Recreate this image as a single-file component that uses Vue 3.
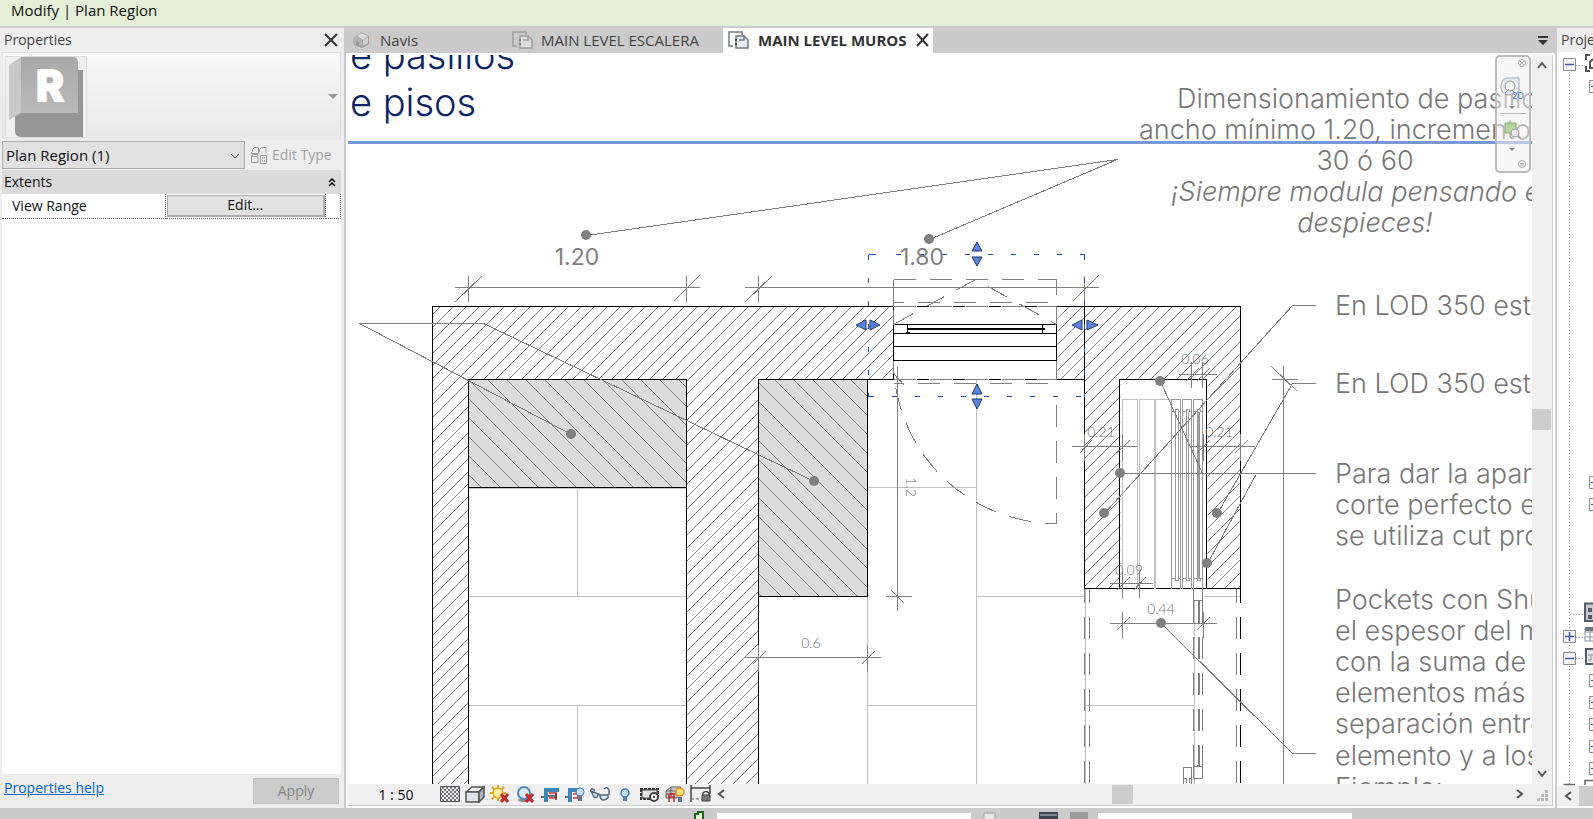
<script setup>
import { ref } from 'vue'

const scale = ref('Plan Region (1)')

const range = (from, to, step) => {
  const out = []
  for (let v = from; v <= to; v += step) out.push(Math.round(v))
  return out
}
// x + y is constant along each wall hatch line
const wallHatch = range(746, 2040, 12.84).map(c => `M${c - 790} 790L${c - 300} 300`).join('')
// x - y is constant along each furniture hatch line
const boxHatch = range(-121, 520, 19.1).map(c => `M${c + 379} 379L${c + 600} 600`).join('')

const dots = [
  [586, 235], [929, 239], [571, 434], [814, 481], [1160, 381], [1120, 473],
  [1104, 513], [1217, 513], [1207, 563], [1161, 623]
]
const dims = [
  { t: '0.06', x: 1195, y: 364 }, { t: '0.21', x: 1101, y: 437 }, { t: '0.21', x: 1219, y: 437 },
  { t: '0.09', x: 1129, y: 575 }, { t: '0.44', x: 1161, y: 614 }, { t: '0.6', x: 811, y: 648 }
]
const notes = [
  ['En LOD 350 estos', 315], ['En LOD 350 estos', 393], ['Para dar la apariencia', 483],
  ['corte perfecto en', 514], ['se utiliza cut profile', 545], ['Pockets con Shutter', 609],
  ['el espesor del muro', 640], ['con la suma de', 671], ['elementos más', 702],
  ['separación entre', 733], ['elemento y a los', 765], ['Ejemplo:', 797]
]
const treeBoxes = [[1589, 80], [1589, 476], [1589, 498], [1589, 674], [1589, 696], [1589, 718], [1589, 740], [1589, 762]]
</script>

<template>
  <div class="app">
    <header class="ribbon">Modify | Plan Region</header>

    <div class="work">
      <aside class="props">
        <div class="panel-head">
          <span>Properties</span>
          <button class="bare" aria-label="Close properties">
            <svg width="14" height="14"><path d="M1 1L13 13M13 1L1 13" stroke="#333" stroke-width="2" /></svg>
          </button>
        </div>
        <div class="type-box">
          <svg class="logo" width="82" height="82" viewBox="0 0 82 82">
            <defs>
              <linearGradient id="lg" x1="0" y1="0" x2="0" y2="1"><stop offset="0" stop-color="#a9a9a9" /><stop offset="1" stop-color="#b9b9b9" /></linearGradient>
            </defs>
            <path d="M0.5 0.5H81.5V81.5H0.5Z" fill="#f0f0f0" stroke="#dcdcdc" />
            <path d="M10 57H73V14H78V81H17Q10 81 10 75Z" fill="#969696" />
            <path d="M16 1H68Q73 1 73 6V57H16Z" fill="url(#lg)" />
            <path d="M16 1V57L4 64V9Z" fill="#c8c8c8" />
            <text x="31" y="45" font-family="Inter, sans-serif" font-weight="800" font-size="42" fill="#fff" stroke="#fff" stroke-width="2">R</text>
          </svg>
          <button class="bare" aria-label="Choose type"><svg width="10" height="6"><path d="M0 0H10L5 5Z" fill="#999" /></svg></button>
        </div>
        <div class="type-row">
          <div class="combo">
            <select v-model="scale" aria-label="Element filter"><option>Plan Region (1)</option></select>
            <svg width="10" height="6"><path d="M1 1L5 5L9 1" fill="none" stroke="#444" /></svg>
          </div>
          <button class="bare edit-type">
            <svg width="16" height="17" fill="none" stroke="#9c9c9c"><path d="M1.5 5V2.5L3.5 .5H7.5V6.5H.5V5M.5 9.5H6.500M.5 15.500V9L2 7.500H7V15.500ZM8.500 5V2.500L10.500.5H15V6" /><path d="M9.500 8.500H15.500V16.500H9.500ZM11 11H14M11 14H12M13 14H14" /></svg>
            Edit Type
          </button>
        </div>
        <table class="grid">
          <colgroup><col class="c-name"><col><col class="c-tail"></colgroup>
          <thead>
            <tr><th colspan="3"><span class="group">Extents
              <svg width="8" height="9"><path d="M1 4L4 1L7 4M1 8L4 5L7 8" fill="none" stroke="#000" stroke-width="1.500" /></svg></span></th></tr>
          </thead>
          <tbody>
            <tr><td class="name">View Range</td><td class="val"><button class="edit">Edit...</button></td><td></td></tr>
          </tbody>
        </table>
        <div class="blank"></div>
        <div class="foot">
          <a href="#">Properties help</a>
          <button class="apply" disabled>Apply</button>
        </div>
      </aside>

      <main class="center">
        <nav class="tabs">
          <button class="tab t1">
            <svg width="18" height="18"><path d="M1 8L9 1L17 5V13L10 17L2 14Z" fill="#9a9a9a" /><path d="M9 2L16 5L11 9L5 5Z" fill="#dadada" /><path d="M1 8L5 5L10 9V16L7 15V11L4 10V14L2 13Z" fill="#b0b0b0" /><path d="M11 9L16 6V12L11 15Z" fill="#d0d0d0" /></svg>
            Navis
          </button>
          <button class="tab t2">
            <svg width="21" height="18" fill="none" stroke="#a0a0a0" stroke-width="1.500"><path d="M5 15H1V1H14V4" /><path d="M8 5H16L20 9V17H8Z" fill="#ddd" /><path d="M8 8V15" stroke="#777" stroke-dasharray="2 2" /><path d="M11 9H16V4" /></svg>
            MAIN LEVEL ESCALERA
          </button>
          <button class="tab t3 active">
            <svg width="21" height="18" fill="none" stroke="#737a82" stroke-width="1.500"><path d="M5 15H1V1H14V4" /><path d="M8 5H16L20 9V17H8Z" fill="#e8ecf1" /><path d="M8 8V15" stroke="#333" stroke-dasharray="2 2" /><path d="M11 9H16V4" /></svg>
            MAIN LEVEL MUROS
            <svg width="13" height="14"><path d="M1 1L12 13M12 1L1 13" stroke="#333" stroke-width="2" /></svg>
          </button>
          <span class="grow"></span>
          <button class="bare more" aria-label="Open views"><svg width="10" height="9"><path d="M0 0H10V2H0ZM0 4H10L5 9Z" fill="#333" /></svg></button>
        </nav>

        <div class="frame">
          <div class="upper">
            <div class="view">
              <svg class="drawing" role="img" aria-label="Floor plan">
                <defs>
                  <clipPath id="walls">
                    <path clip-rule="evenodd" d="M432 306H893V379H867V379H758V790H686V379H468V790H432ZM1057 306H1240V588H1207V379H1120V588H1084V379H1057Z" />
                  </clipPath>
                  <clipPath id="boxes"><path d="M468 379H686V487H468ZM758 379H867V596H758Z" /></clipPath>
                </defs>
                <g transform="translate(-347.5 -54.5)" fill="none" shape-rendering="crispEdges">
                  <path class="title-rule" d="M347 142H1700" />
                  <!-- floor tiles -->
                  <path stroke="#c0c0c0" d="M577 488V596M577 705V790M468 488H686M468 596H686M468 705H686M867 596V790M976 379V790M867 487H976M976 596H1084M867 705H976M1085 588V790M1085 705H1194M1194 600V790M1203 596H1240" />
                  <!-- walls and furniture -->
                  <path d="M468 379H686V487H468ZM758 379H867V596H758Z" fill="#dcdcdc" />
                  <path :d="boxHatch" stroke="#808080" clip-path="url(#boxes)" />
                  <path :d="wallHatch" stroke="#808080" clip-path="url(#walls)" />
                  <path stroke="#000" d="M432 790V306H893M468 790V379H686V790M468 487H686M758 790V379H893M867 379V596H758M1056 306H1240V588M1056 379H1084M1084 306V588H1240M1119 588V379H1206V588" />
                  <!-- window -->
                  <path stroke="#808080" d="M893 279V324M1056 279V294M1056 306V379" />
                  <path stroke="#000" d="M893 306V309M893 379V324H1056V360H893M893 333H1056M893 346H1056M907 324V333M905 332H909M1042 324V333" />
                  <path stroke="#000" stroke-width="2" d="M907 328H1044" />
                  <g stroke="#808080" stroke-dasharray="22 14">
                    <path d="M893 279H1056M893 324L975 279L1056 324" />
                    <path stroke-dashoffset="12" d="M893 302H1056M893 383H1056" />
                    <path d="M893 306H1056M893 379H1056" />
                    <path stroke="#000" stroke-dasharray="12 24" stroke-dashoffset="-23" d="M893 306H1056M893 379H1056" />
                    <path stroke-dashoffset="8" d="M893 360A163 163 0 0 0 1056 523V397" />
                    <!-- lower shutters -->
                    <path stroke-dashoffset="8" d="M1084 588V790M1089 588V790M1236 588V790" />
                    <path stroke="#000" stroke-dashoffset="8" d="M1240 588V790" />
                    <path d="M1193 600V768M1202 600V768" />
                    <path stroke-width="2" d="M1198 600V768" />
                  </g>
                  <!-- pocket leaves -->
                  <path stroke="#c0c0c0" d="M1122 588V399H1137V588M1139 588V399H1154V588M1155 588V399H1171" />
                  <path stroke="#999" d="M1171 588V399H1180V588M1182 588V399H1191V588M1193 588V399H1202V588M1171 411H1175V409H1178V411H1180M1182 411H1186V409H1189V411H1191M1193 411H1197V409H1200V411H1202M1171 578H1175V580H1178V578H1180M1182 578H1186V580H1189V578H1191M1193 578H1197V580H1200V578H1202M1175 411V578M1178 411V578M1186 411V578M1188 411V578M1197 411V578M1198 411V578M1199 411V578" />
                  <path stroke="#808080" d="M1193 588V600H1202V588M1193 766V778H1202V766H1199V764M1197 764V766H1193M1183 790V767H1191V790M1183 778H1186V782M1189 782V778H1191" />
                  <!-- dimensions -->
                  <path stroke="#808080" d="M454 287H699M468 275V301M686 275V301M455 301L482 275M673 301L699 275M744 287H1098M758 275V301M1084 275V301M745 301L772 275M1072 301L1098 275" />
                  <path stroke="#808080" d="M743 657H880M758 644V671M867 644V671M752 664L765 651M861 664L874 651M897 366V610M885 596H911M891 590L904 603M893 373L904 385M893 379H904" />
                  <path stroke="#808080" d="M1071 446H1136M1084 433V460M1122 433V460M1079 453L1091 440M1116 453L1129 440M1190 446H1254M1203 433V460M1240 433V460M1196 453L1209 440M1234 453L1247 440M1178 374H1216M1191 361V387M1202 361V387M1185 381L1198 368M1196 381L1209 368" />
                  <path stroke="#808080" d="M1109 583H1152M1122 570V597M1139 570V597M1116 590L1129 577M1133 590L1145 577M1109 623H1216M1122 611V637M1203 611V637M1116 630L1129 617M1196 630L1209 617M1283 365V790M1271 379H1297M1271 366L1297 391" />
                  <!-- leaders -->
                  <path stroke="#808080" d="M586 235L1117 159L929 239M814 481L483 323H359L571 434M1315 305H1292L1104 513M1315 383H1292L1217 513M1315 473H1120M1160 381L1202 473M1255 475L1207 563M1315 753H1292L1161 623" />
                  <path stroke="#1a4fc0" stroke-dasharray="7 20 5 18 5 18 5 18 5 18 5 18 5 18 5 18 5 18" d="M868 254H1084" />
                  <path stroke="#1a4fc0" stroke-dasharray="5 18" d="M868 396H1084M868 254V396M1084 254V396" />
                </g>
                <g transform="translate(-348 -55)">
                  <circle v-for="(d, i) in dots" :key="i" :cx="d[0]" :cy="d[1]" r="5" fill="#808080" />
                  <path fill="#5b84dc" stroke="#20386e" d="M977 242L972 251H982ZM972 257H982L977 266ZM977 384L972 394H982ZM972 399H982L977 409ZM856 325L866 320V330ZM870 320V330L880 325ZM1072 325L1082 320V330ZM1087 320V330L1098 325Z" />

                  <g class="title"><text x="350" y="69">e pasillos</text><text x="350" y="116">e pisos</text></g>
                  <g class="note">
                    <text x="1177" y="108">Dimensionamiento de pasillo</text>
                    <text x="1139" y="139">ancho mínimo 1.20, incremento</text>
                    <text x="1365" y="170" text-anchor="middle">30 ó 60</text>
                    <text x="1171" y="201" class="it">¡Siempre modula pensando en</text>
                    <text x="1365" y="232" text-anchor="middle" class="it">despieces!</text>
                    <text v-for="(n, i) in notes" :key="i" x="1335" :y="n[1]">{{ n[0] }}</text>
                  </g>
                  <g class="big"><text x="577" y="265">1.20</text><text x="922" y="265">1.80</text></g>
                  <g class="small">
                    <text v-for="(d, i) in dims" :key="i" :x="d.x" :y="d.y">{{ d.t }}</text>
                    <text transform="translate(906 487) rotate(90)">1.2</text>
                  </g>
                </g>
              </svg>
              <div class="navbar">
                <button class="bare end" aria-label="Close"><svg width="8" height="8" fill="none" stroke="#aaa"><circle cx="4" cy="4" r="3.500" /><path d="M2 2L6 6M6 2L2 6" /></svg></button>
                <button class="bare" aria-label="2D wheel">
                  <svg width="26" height="34"><path d="M1 12C1 5 5 3 9 3H19V14C19 18 15 20 10 20C4 20 1 17 1 12Z" fill="#e3e6ec" fill-opacity=".7" stroke="#a4a8b0" /><circle cx="10" cy="11" r="5" fill="#f4f4f4" stroke="#999" /><path d="M5 18L9 14M15 18L12 15" stroke="#999" /><text x="12" y="24" font-family="Inter, sans-serif" font-size="9" font-weight="500" fill="#5b90cc">2D</text><path d="M9 31H15L12 34Z" fill="#888" /></svg>
                </button>
                <hr />
                <button class="bare" aria-label="Zoom">
                  <svg width="26" height="34"><path d="M5 5H16V12L11 15H5Z" fill="#b4d4a0" stroke="#84b070" /><circle cx="15" cy="15" r="4" fill="#e8e8e8" stroke="#a4a4a4" /><path d="M18 18L21 21" stroke="#a4a4a4" stroke-width="2" /><path d="M9 30H15L12 33Z" fill="#888" /></svg>
                </button>
                <button class="bare end low" aria-label="Options"><svg width="8" height="8" fill="none" stroke="#aaa"><circle cx="4" cy="4" r="3.500" /><path d="M2 3.500H6M2 5H6" /></svg></button>
              </div>
            </div>
            <div class="vscroll">
              <button class="bare" aria-label="Scroll up"><svg width="10" height="8"><path d="M1 7L5 2L9 7" fill="none" stroke="#555" stroke-width="2" /></svg></button>
              <div class="vtrack"><span class="vthumb"></span></div>
              <button class="bare" aria-label="Scroll down"><svg width="10" height="8"><path d="M1 1L5 6L9 1" fill="none" stroke="#555" stroke-width="2" /></svg></button>
            </div>
          </div>

          <div class="viewbar">
            <button class="bare scale">1 : 50</button>
            <div class="tools">
              <button class="bare" aria-label="Detail level"><svg width="20" height="18"><defs><pattern id="chk" width="4" height="4" patternUnits="userSpaceOnUse"><path d="M0 0H2V2H4V4H2V2H0Z" fill="#777" /></pattern></defs><path d="M.5 1.500H19.500V16.500H.5Z" fill="#e6e8ec" stroke="#555" /><path d="M1 2H19V16H1Z" fill="url(#chk)" /></svg></button>
              <button class="bare" aria-label="Visual style"><svg width="20" height="18" stroke="#555" stroke-width="1.500"><path d="M1 7L7 2H19L14 7Z" fill="#f5f5f5" /><path d="M1 7H14V17H1Z" fill="#e0e2e8" /><path d="M14 7L19 2V12L14 17Z" fill="#aeb2bc" /></svg></button>
              <button class="bare" aria-label="Sun path off"><svg width="20" height="18"><path d="M8 0V16M0 8H16M2 2L14 14M14 2L2 14" stroke="#e8a81c" stroke-width="2" /><circle cx="8" cy="8" r="5" fill="#fff0a0" stroke="#e8a81c" stroke-width="1.500" /><path d="M11 9L18 17M18 9L11 17" stroke="#c8282c" stroke-width="3" /></svg></button>
              <button class="bare" aria-label="Shadows off"><svg width="20" height="18"><ellipse cx="10" cy="15" rx="7" ry="2" fill="#888" /><circle cx="9" cy="8" r="6" fill="#d6e9f8" stroke="#4d88c0" stroke-width="2" /><path d="M11 9L18 17M18 9L11 17" stroke="#c8282c" stroke-width="3" /></svg></button>
              <button class="bare" aria-label="Crop view"><svg width="20" height="18"><path d="M9 8H16V13H9" fill="none" stroke="#d03030" stroke-width="1.500" /><path d="M1 12H6M16 8V15M6 11H17" stroke="#444" stroke-width="1.500" /><path d="M6 17V5H19" fill="none" stroke="#3c86b8" stroke-width="4" /></svg></button>
              <button class="bare" aria-label="Crop region"><svg width="20" height="18"><path d="M8 9H13V13H8" fill="none" stroke="#d03030" stroke-width="1.500" /><path d="M0 12H4" stroke="#444" stroke-width="1.500" /><path d="M5 17V5H14" fill="none" stroke="#3c86b8" stroke-width="4" /><circle cx="15" cy="7" r="4" fill="#c9e2f8" stroke="#3f7fc0" /><path d="M13 11H17V16H13Z" fill="#6a7c90" /></svg></button>
              <button class="bare" aria-label="Hide or isolate"><svg width="20" height="18" fill="#d8e4ee" stroke="#556878" stroke-width="1.500"><path d="M1 5Q2 2 5 6M14 4Q17 1 19 5V10" fill="none" /><path d="M1 6L8 9Q8 14 4 12ZM10 10L18 10Q19 14 14 15Q10 15 10 10ZM8 9L10 10" /></svg></button>
              <button class="bare" aria-label="Reveal hidden"><svg width="20" height="18"><circle cx="10" cy="8" r="4" fill="#c9e2f8" stroke="#3f7fc0" stroke-width="1.500" /><path d="M8 12H12V16H8Z" fill="#5a7ca8" /></svg></button>
              <button class="bare" aria-label="Temporary view"><svg width="20" height="18"><path d="M1 4V14H18V4Z" fill="none" stroke="#333" stroke-width="2" stroke-dasharray="3 1" /><path d="M2 5H17V13H2Z" fill="#e4e4e4" stroke="#444" /><circle cx="14" cy="12" r="4" fill="#fff" stroke="#444" stroke-width="2" /><circle cx="14" cy="12" r="1" fill="#222" /></svg></button>
              <button class="bare" aria-label="Analytical model"><svg width="20" height="18"><path d="M1 6L6 2H16L12 6ZM1 6V13H12V6M6 2V12M1 9H12" fill="#c8c8c8" stroke="#666" /><path d="M4 17V9H9V17M3 12H10" fill="none" stroke="#c03030" stroke-width="1.500" /><circle cx="15" cy="7" r="4" fill="#ffdf80" stroke="#ee8a18" stroke-width="1.500" /><path d="M13 12H17V17H13Z" fill="#5f7690" /></svg></button>
              <button class="bare" aria-label="Reveal constraints"><svg width="21" height="18"><path d="M1 0V17M20 0V9M1 3H20" stroke="#444" stroke-width="1.500" /><path d="M1 14H12" stroke="#666" stroke-dasharray="3 2" /><path d="M12 10H20V16H12Z" fill="#777" stroke="#444" /><path d="M13 10V8Q16 5 19 8V10" fill="none" stroke="#444" stroke-width="1.500" /></svg></button>
            </div>
            <button class="bare harrow" aria-label="Scroll left"><svg width="8" height="10"><path d="M7 1L2 5L7 9" fill="none" stroke="#555" stroke-width="2" /></svg></button>
            <div class="htrack"><span class="hthumb"></span></div>
            <button class="bare harrow" aria-label="Scroll right"><svg width="8" height="10"><path d="M1 1L6 5L1 9" fill="none" stroke="#555" stroke-width="2" /></svg></button>
            <svg class="grip" width="12" height="12" fill="#bbb"><path d="M8 0H11V3H8ZM4 4H7V7H4ZM8 4H11V7H8ZM0 8H3V11H0ZM4 8H7V11H4ZM8 8H11V11H8Z" /></svg>
          </div>
        </div>
      </main>

      <aside class="project">
        <div class="panel-head">Project Browser</div>
        <div class="tree">
          <svg role="img" aria-label="Project tree">
            <g transform="translate(-1557 -52)">
              <path d="M1569.500 72V790M1576 65.500H1585M1570 614.500H1584M1576 637.500H1584M1576 658.500H1584" stroke="#999" stroke-dasharray="1 2" />
              <g fill="#f6f6f6" stroke="#8c8c8c">
                <path d="M1563.500 58.500H1575.500V70.500H1563.500ZM1563.500 630.500H1575.500V642.500H1563.500ZM1563.500 652.500H1575.500V664.500H1563.500Z" />
                <path v-for="(b, i) in treeBoxes" :key="i" :d="`M${b[0]}.5 ${b[1]}.5h12v12h-12z`" />
              </g>
              <path d="M1565 64.500H1574M1565 636.500H1574M1569.500 632V641M1565 658.500H1574" stroke="#3c5cb0" stroke-width="1.500" />
              <path v-for="(b, i) in treeBoxes" :key="i" :d="`M${b[0] + 2} ${b[1]}.5m0 6h8`" stroke="#3c5cb0" />
              <path d="M1590 55H1586V60M1586 66V71H1590M1593 59L1590 62V68H1593" fill="none" stroke="#555" stroke-width="2" />
              <path d="M1585 603.500H1600V621H1585Z" fill="#c8ccd2" stroke="#555c66" stroke-width="2" /><path d="M1588 608H1592V612H1588ZM1588 615H1592V619H1588Z" fill="#505a68" />
              <path d="M1585 628H1600V641H1585ZM1585 632H1600M1585 637H1600M1590 628V641" fill="#fff" stroke="#8a929c" /><path d="M1585 627H1600V631H1585Z" fill="#6d7682" />
              <path d="M1586 649H1600V664H1586Z" fill="#e4e8ee" stroke="#555c66" stroke-width="2" /><path d="M1588 655H1593M1588 660H1591V656" fill="none" stroke="#7a8694" />
              <path d="M1563.500 784.500H1575M1585 785V780.500H1600" stroke="#666" stroke-width="1.500" fill="none" />
            </g>
          </svg>
        </div>
        <div class="pscroll"><button class="bare" aria-label="Scroll left"><svg width="8" height="10"><path d="M7 1L2 5L7 9" fill="none" stroke="#555" stroke-width="2" /></svg></button><span></span></div>
      </aside>
    </div>

    <footer class="status">
      <svg class="s1" width="10" height="8"><path d="M1 8V3H4V1H9V8" fill="#e4f4d8" stroke="#1c6414" stroke-width="2" /></svg>
      <div class="field"></div>
      <svg class="s2" width="106" height="8"><path d="M1 8V2H12V8" fill="#e8e8e8" stroke="#999" /><path d="M56 8V1H75V8Z" fill="#3c4452" /><path d="M57 4H74" stroke="#7c8798" stroke-width="2" /><path d="M87 8V1H105V8Z" fill="#9b9b9b" /></svg>
      <div class="field"></div>
    </footer>
  </div>
</template>

<style>
body { margin: 0; }
</style>

<style scoped>
.app { height: 100vh; display: flex; flex-direction: column; overflow: hidden; background: #cbcbcb; font: 15px/20px "Open Sans", "Noto Sans", sans-serif; color: #111; }
.app * { box-sizing: border-box; }
svg { display: block; flex: none; }
button, select { font: inherit; color: inherit; }
.bare { border: 0; padding: 0; background: none; display: flex; align-items: center; justify-content: center; }
.ribbon { height: 26px; padding-left: 11px; background: #e5efd7; line-height: 20px; flex: none; }
.work { flex: 1; min-height: 0; display: flex; margin-top: 2px; }

.props { width: 344px; flex: none; display: flex; flex-direction: column; background: #eee; padding: 0 3px 0 2px; }
.panel-head { height: 24px; flex: none; display: flex; align-items: center; justify-content: space-between; padding: 0 3px 0 2px; color: #444; font-size: 14px; white-space: nowrap; overflow: hidden; }
.type-box { height: 88px; display: flex; align-items: center; justify-content: space-between; padding: 0 2px; border: 1px solid #e0e0e0; border-bottom: 0; background: linear-gradient(#f8f8f8, #e9e9e9); }
.type-row { height: 30px; display: flex; align-items: center; }
.combo { position: relative; width: 243px; height: 28px; }
.combo select { appearance: none; width: 100%; height: 28px; padding: 0 3px; border: 1px solid #adadad; border-radius: 0; background: #e1e1e1; color: #111; }
.combo svg { position: absolute; right: 5px; top: 12px; pointer-events: none; }
.edit-type { margin-left: 6px; gap: 5px; color: #a0a0a0; font-size: 14px; }
.grid { border-collapse: collapse; width: 339px; table-layout: fixed; background: #fff; font-size: 14px; }
.c-name { width: 163px; }
.c-tail { width: 15px; }
.grid th { height: 24px; padding: 0; background: #dadada; font-weight: 400; text-align: left; }
.group { display: flex; justify-content: space-between; align-items: center; padding: 0 5px 0 2px; }
.grid td { height: 24px; padding: 0; border-bottom: 1px dotted #666; border-right: 1px dotted #666; }
.grid .name { padding-left: 10px; }
.grid .val { padding-left: 1px; }
.edit { display: block; width: 100%; height: 22px; padding: 0; border: 1px solid #adadad; border-right-width: 2px; border-bottom-width: 2px; background: #e1e1e1; line-height: 18px; }
.blank { flex: 1; width: 339px; background: #fff; }
.foot { height: 34px; flex: none; display: flex; justify-content: space-between; padding: 4px 2px 0 2px; font-size: 14px; }
.foot a { color: #0066cc; }
.apply { width: 86px; height: 26px; padding: 0; border: 1px solid #bfbfbf; background: #ccc; color: #848484; }

.center { flex: 1; min-width: 0; margin: 0 2px; display: flex; flex-direction: column; }
.tabs { height: 25px; flex: none; display: flex; background: #cbcbcb; }
.tab { display: flex; align-items: center; border: 0; padding: 0 0 2px; background: none; color: #444; white-space: nowrap; }
.t1 { width: 163px; padding-left: 6px; gap: 10px; }
.t2 { width: 214px; padding-left: 3px; gap: 8px; }
.t3 { width: 210px; padding-left: 5px; gap: 9px; }
.active { background: #fff; color: #333; font-weight: 700; }
.grow { flex: 1; }
.more { width: 25px; }
.frame { flex: 1; min-height: 0; display: flex; flex-direction: column; background: #fff; padding: 2px; }
.upper { flex: 1; min-height: 0; display: flex; border-right: 1px solid #ccc; }
.view { position: relative; flex: 1; min-width: 0; overflow: hidden; }
.drawing { width: 100%; height: 100%; }
.title-rule { stroke: #7898dc; stroke-width: 3px; }
.title { font: 38px Inter, sans-serif; font-weight: 300; fill: #0a2468; }
.note { font: 27px Inter, sans-serif; font-weight: 300; fill: #777; }
.it { font-style: italic; }
.big { font: 23px Inter, sans-serif; fill: #808080; text-anchor: middle; }
.small { font: 300 14px Lato, sans-serif; fill: #707070; text-anchor: middle; }
.navbar { position: absolute; right: 1px; top: 0; width: 36px; height: 118px; border: 2px solid #bcbcbc; border-radius: 5px; background: rgb(240 240 240 / 55%); padding: 2px 3px; display: flex; flex-direction: column; }
.navbar hr { width: 100%; margin: 4px 0; border: 0; border-top: 1px solid #bbb; }
.end { justify-content: flex-end; height: 8px; margin-bottom: 8px; }
.low { margin: auto 0 1px; }
.vscroll { width: 20px; flex: none; background: #f0f0f0; display: flex; flex-direction: column; align-items: center; }
.vscroll button { width: 20px; height: 20px; }
.vtrack { flex: 1; width: 20px; display: flex; flex-direction: column; }
.vtrack::before { content: ""; flex: 334 0 0; }
.vtrack::after { content: ""; flex: 334 0 0; }
.vthumb { height: 21px; background: #cdcdcd; margin-right: 1px; }
.viewbar { height: 22px; flex: none; display: flex; align-items: center; background: #f0f0f0; padding-bottom: 1px; border-bottom: 1px solid #ccc; border-right: 1px solid #ccc; }
.scale { width: 92px; font: 14px "Noto Sans", sans-serif; color: #111; padding-left: 4px; }
.tools { display: flex; gap: 5px; }
.harrow { width: 20px; height: 20px; }
.htrack { flex: 1; height: 19px; display: flex; }
.htrack::before { content: ""; flex: 380 0 0; }
.htrack::after { content: ""; flex: 377 0 0; }
.hthumb { width: 21px; background: #cdcdcd; }
.grip { margin: 3px 3px 0 7px; }

.project { width: 36px; flex: none; display: flex; flex-direction: column; background: #fff; overflow: hidden; }
.project .panel-head { background: #eee; padding-left: 4px; }
.tree { flex: 1; min-height: 0; }
.tree svg { width: 100%; height: 100%; }
.pscroll { height: 22px; flex: none; display: flex; background: #f0f0f0; border-bottom: 2px solid #fff; }
.pscroll button { width: 22px; }
.pscroll span { flex: 1; background: #cdcdcd; }

.status { height: 11px; flex: none; display: flex; align-items: flex-end; padding-left: 694px; overflow: hidden; }
.field { width: 254px; height: 6px; background: #fff; flex: none; }
.s1 { margin-right: 13px; }
.s2 { margin: 0 9px 0 12px; }
</style>
